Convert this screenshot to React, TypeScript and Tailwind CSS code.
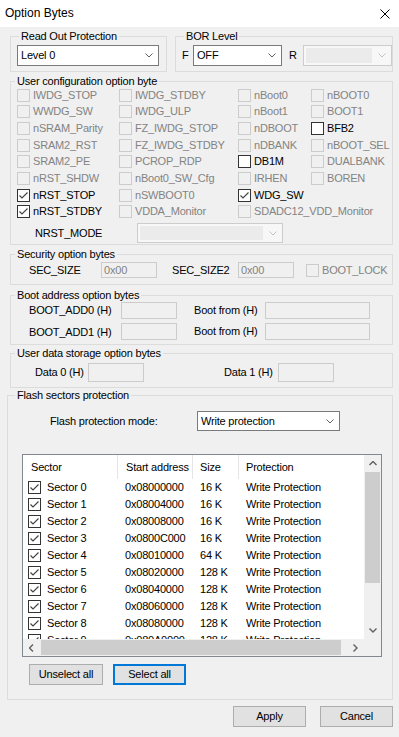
import type { ReactNode } from 'react';

type Item = { label: string; checked?: boolean; disabled?: boolean } | null;

const configRows: Item[][] = [
  [
    { label: 'IWDG_STOP', disabled: true },
    { label: 'IWDG_STDBY', disabled: true },
    { label: 'nBoot0', disabled: true },
    { label: 'nBOOT0', disabled: true },
  ],
  [
    { label: 'WWDG_SW', disabled: true },
    { label: 'IWDG_ULP', disabled: true },
    { label: 'nBoot1', disabled: true },
    { label: 'BOOT1', disabled: true },
  ],
  [
    { label: 'nSRAM_Parity', disabled: true },
    { label: 'FZ_IWDG_STOP', disabled: true },
    { label: 'nDBOOT', disabled: true },
    { label: 'BFB2' },
  ],
  [
    { label: 'SRAM2_RST', disabled: true },
    { label: 'FZ_IWDG_STDBY', disabled: true },
    { label: 'nDBANK', disabled: true },
    { label: 'nBOOT_SEL', disabled: true },
  ],
  [
    { label: 'SRAM2_PE', disabled: true },
    { label: 'PCROP_RDP', disabled: true },
    { label: 'DB1M' },
    { label: 'DUALBANK', disabled: true },
  ],
  [
    { label: 'nRST_SHDW', disabled: true },
    { label: 'nBoot0_SW_Cfg', disabled: true },
    { label: 'IRHEN', disabled: true },
    { label: 'BOREN', disabled: true },
  ],
  [
    { label: 'nRST_STOP', checked: true },
    { label: 'nSWBOOT0', disabled: true },
    { label: 'WDG_SW', checked: true },
    null,
  ],
  [
    { label: 'nRST_STDBY', checked: true },
    { label: 'VDDA_Monitor', disabled: true },
    { label: 'SDADC12_VDD_Monitor', disabled: true },
    null,
  ],
];

const sectors = [
  ['Sector 0', '0x08000000', '16 K'],
  ['Sector 1', '0x08004000', '16 K'],
  ['Sector 2', '0x08008000', '16 K'],
  ['Sector 3', '0x0800C000', '16 K'],
  ['Sector 4', '0x08010000', '64 K'],
  ['Sector 5', '0x08020000', '128 K'],
  ['Sector 6', '0x08040000', '128 K'],
  ['Sector 7', '0x08060000', '128 K'],
  ['Sector 8', '0x08080000', '128 K'],
  ['Sector 9', '0x080A0000', '128 K'],
];

function GroupBox({
  title,
  legendClass = 'ml-[4px]',
  className = '',
  bodyClass = '',
  children,
}: {
  title: string;
  legendClass?: string;
  className?: string;
  bodyClass?: string;
  children: ReactNode;
}) {
  return (
    <fieldset className={`min-w-0 border border-[#dcdcdc] ${className}`}>
      <legend className={`px-[2px] leading-[13px] ${legendClass}`}>{title}</legend>
      <div className={bodyClass}>{children}</div>
    </fieldset>
  );
}

function CheckBox({ checked, disabled }: { checked?: boolean; disabled?: boolean }) {
  return (
    <span
      className={`flex h-[13px] w-[13px] shrink-0 items-center justify-center border ${
        disabled ? 'border-[#cccccc]' : 'border-[#333333] bg-white'
      }`}
    >
      {checked && (
        <svg width="11" height="11" viewBox="0 0 11 11">
          <polyline points="1.5,5.5 4,8 9.5,2.5" fill="none" stroke="#444444" strokeWidth="1.2" />
        </svg>
      )}
    </span>
  );
}

function CheckItem({ item }: { item: Item }) {
  if (!item) return <div />;
  return (
    <div className="flex items-center gap-[3px] whitespace-nowrap">
      <CheckBox checked={item.checked} disabled={item.disabled} />
      <span className={item.disabled ? 'text-[#838383]' : ''}>{item.label}</span>
    </div>
  );
}

function Chevron({ color = '#606060' }: { color?: string }) {
  return (
    <svg width="8" height="5" viewBox="0 0 8 5" className="shrink-0">
      <polyline points="0.5,0.5 4,4 7.5,0.5" fill="none" stroke={color} />
    </svg>
  );
}

function Combo({ value, className = '' }: { value: string; className?: string }) {
  return (
    <div className={`flex items-center border border-[#7a7a7a] bg-white pr-[5px] ${className}`}>
      <span className="flex-1 truncate pl-[3px]">{value}</span>
      <Chevron />
    </div>
  );
}

function DisabledCombo({ className = '' }: { className?: string }) {
  return (
    <div className={`flex items-center border border-[#cccccc] bg-[#f7f7f7] py-[2px] pl-[2px] pr-[5px] ${className}`}>
      <span className="mr-[6px] h-full flex-1 bg-[#ebebeb]" />
      <Chevron color="#c2c2c2" />
    </div>
  );
}

function Field({ value = '', className = '' }: { value?: string; className?: string }) {
  return (
    <div className={`flex items-center border border-[#cccccc] bg-[#f0f0f0] pl-[2px] text-[#838383] ${className}`}>
      {value}
    </div>
  );
}

function ArrowIcon({ dir }: { dir: 'up' | 'down' | 'left' | 'right' }) {
  const pts = {
    up: '0.5,4 4,0.5 7.5,4',
    down: '0.5,0.5 4,4 7.5,0.5',
    left: '4,0.5 0.5,4 4,7.5',
    right: '0.5,0.5 4,4 0.5,7.5',
  }[dir];
  const vertical = dir === 'up' || dir === 'down';
  return (
    <svg width={vertical ? 8 : 5} height={vertical ? 5 : 8} viewBox={vertical ? '0 0 8 5' : '0 0 5 8'}>
      <polyline points={pts} fill="none" stroke="#606060" strokeWidth="1.4" />
    </svg>
  );
}

function SectorTable() {
  return (
    <div className="ml-[14px] mt-[23px] flex h-[203px] w-[360px] flex-col border border-[#828790] bg-white">
      <div className="flex min-h-0 flex-1">
        <div className="min-w-0 flex-1 overflow-hidden">
          <div className="grid h-[24px] grid-cols-[95px_75px_45px_1fr] items-center">
            <div className="flex h-full items-center border-r border-[#e5e5e5] pl-[8px]">Sector</div>
            <div className="flex h-full items-center border-r border-[#e5e5e5] pl-[8px]">Start address</div>
            <div className="flex h-full items-center pl-[7px]">Size</div>
            <div className="flex h-full items-center border-l border-[#e5e5e5] pl-[7px]">Protection</div>
          </div>
          {sectors.map(([name, addr, size]) => (
            <div key={name} className="grid h-[17px] grid-cols-[95px_75px_45px_1fr] items-center whitespace-nowrap">
              <div className="flex items-center gap-[6px] pl-[5px]">
                <CheckBox checked />
                <span>{name}</span>
              </div>
              <div className="pl-[7px]">{addr}</div>
              <div className="pl-[7px]">{size}</div>
              <div className="pl-[8px]">Write Protection</div>
            </div>
          ))}
        </div>
        <div className="flex w-[17px] flex-col bg-[#f0f0f0]">
          <div className="flex h-[17px] items-center justify-center">
            <ArrowIcon dir="up" />
          </div>
          <div className="flex-1 px-[1px]">
            <div className="h-[111px] bg-[#cdcdcd]" />
          </div>
          <div className="flex h-[17px] items-center justify-center">
            <ArrowIcon dir="down" />
          </div>
        </div>
      </div>
      <div className="flex h-[17px] bg-[#f0f0f0]">
        <div className="flex w-[17px] items-center justify-center">
          <ArrowIcon dir="left" />
        </div>
        <div className="flex-1 py-[1px] pl-[1px]">
          <div className="h-full w-[300px] bg-[#cdcdcd]" />
        </div>
        <div className="flex w-[17px] items-center justify-center">
          <ArrowIcon dir="right" />
        </div>
        <div className="w-[17px]" />
      </div>
    </div>
  );
}

export default function App() {
  return (
    <div className="h-screen w-full overflow-hidden bg-[#f0f0f0] font-['Liberation_Sans',Arial,sans-serif] text-[11px] leading-[13px] tracking-[-0.2px] text-black">
      <div className="flex h-[27px] items-center justify-between bg-white pl-[5px] pr-[9px] text-[12px] tracking-normal">
        <span>Option Bytes</span>
        <svg width="10" height="10" viewBox="0 0 10 10">
          <path d="M0.5 0.5 L9.5 9.5 M9.5 0.5 L0.5 9.5" stroke="#000" strokeWidth="1" />
        </svg>
      </div>

      <div className="flex flex-col pl-[10px] pr-[6px]">
        <div className="mt-[3px] flex gap-[8px]">
          <GroupBox title="Read Out Protection" legendClass="ml-[8px]" className="w-[157px]" bodyClass="px-[6px] pb-[5px]">
            <Combo value="Level 0" className="mt-[2px] h-[21px] w-[142px]" />
          </GroupBox>
          <GroupBox title="BOR Level" legendClass="ml-[8px]" className="flex-1" bodyClass="pb-[5px] pl-[6px]">
            <div className="mt-[2px] flex items-center">
              <span className="w-[11px]">F</span>
              <Combo value="OFF" className="h-[21px] w-[89px]" />
              <span className="w-[14px] pl-[7px]">R</span>
              <span className="w-[7px]" />
              <DisabledCombo className="h-[21px] w-[89px]" />
            </div>
          </GroupBox>
        </div>

        <GroupBox title="User configuration option byte" className="mt-[3px]" bodyClass="pb-[1px] pl-[6px]">
          <div className="-mt-[1px] flex flex-col">
            {configRows.map((row, i) => (
              <div key={i} className="grid h-[16.67px] grid-cols-[102px_119px_73px_1fr] items-center">
                {row.map((item, j) => (
                  <CheckItem key={j} item={item} />
                ))}
              </div>
            ))}
          </div>
          <div className="mt-[3px] flex h-[20px] items-center">
            <span className="w-[120px] pl-[18px]">NRST_MODE</span>
            <DisabledCombo className="h-[20px] w-[146px]" />
          </div>
        </GroupBox>

        <GroupBox title="Security option bytes" className="mt-[3px]" bodyClass="pb-[6px] pl-[18px]">
          <div className="mt-[1px] flex h-[16px] items-center">
            <span className="w-[72px]">SEC_SIZE</span>
            <Field value="0x00" className="h-[16px] w-[56px]" />
            <span className="ml-[15px] w-[66px]">SEC_SIZE2</span>
            <Field value="0x00" className="h-[16px] w-[56px]" />
            <div className="ml-[12px] flex items-center gap-[3px]">
              <CheckBox disabled />
              <span className="text-[#838383]">BOOT_LOCK</span>
            </div>
          </div>
        </GroupBox>

        <GroupBox title="Boot address option bytes" className="mt-[4px]" bodyClass="pb-[4px] pl-[18px]">
          <div className="flex flex-col gap-[4px]">
            {['BOOT_ADD0 (H)', 'BOOT_ADD1 (H)'].map((label, i) => (
              <div key={label} className="flex h-[17px] items-center">
                <span className={`w-[92px] ${i === 1 ? 'pt-[2px]' : ''}`}>{label}</span>
                <Field className="h-[17px] w-[56px]" />
                <span className="ml-[17px] w-[71px]">Boot from (H)</span>
                <Field className="h-[17px] w-[105px]" />
              </div>
            ))}
          </div>
        </GroupBox>

        <GroupBox title="User data storage option bytes" className="mt-[2px]" bodyClass="pb-[5px] pl-[24px]">
          <div className="mt-[3px] flex h-[19px] items-center">
            <span className="w-[53px]">Data 0 (H)</span>
            <Field className="h-[19px] w-[56px]" />
            <span className="ml-[80px] w-[54px]">Data 1 (H)</span>
            <Field className="h-[19px] w-[56px]" />
          </div>
        </GroupBox>

        <GroupBox title="Flash sectors protection" legendClass="ml-[7px]" className="-ml-[3px] mt-[1px]" bodyClass="pb-[14px]">
          <div className="mt-[9px] flex h-[20px] items-center pl-[42px]">
            <span className="w-[147px]">Flash protection mode:</span>
            <Combo value="Write protection" className="h-[20px] w-[143px]" />
          </div>
          <SectorTable />
          <div className="ml-[21px] mt-[7px] flex gap-[10px]">
            <button className="h-[21px] w-[74px] border border-[#adadad] bg-[#e1e1e1]">Unselect all</button>
            <button className="h-[21px] w-[73px] border-2 border-[#0078d7] bg-[#e1e1e1]">Select all</button>
          </div>
        </GroupBox>

        <div className="mt-[6px] flex justify-end gap-[14px]">
          <button className="h-[21px] w-[73px] border border-[#adadad] bg-[#e1e1e1]">Apply</button>
          <button className="h-[21px] w-[73px] border border-[#adadad] bg-[#e1e1e1]">Cancel</button>
        </div>
      </div>
    </div>
  );
}
